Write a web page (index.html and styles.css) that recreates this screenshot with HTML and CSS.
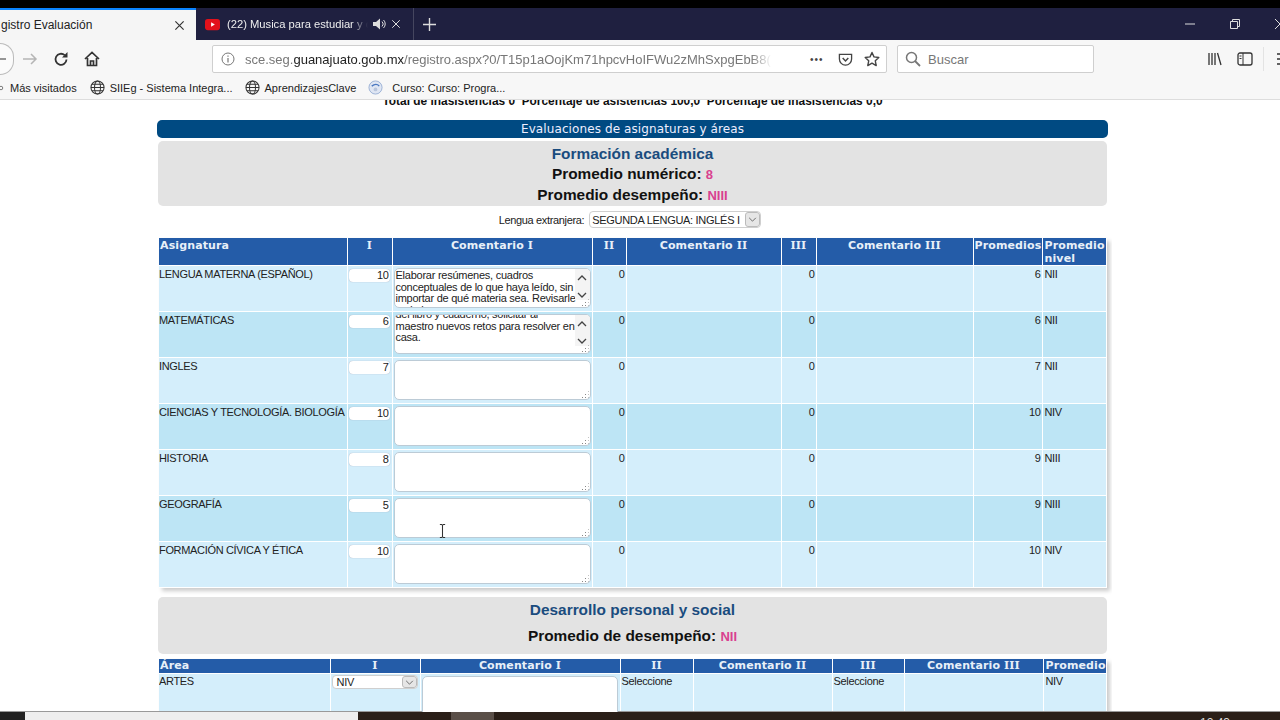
FILE: index.html
```html
<!DOCTYPE html>
<html lang="es">
<head>
<meta charset="utf-8">
<title>Registro Evaluación</title>
<link rel="stylesheet" href="styles.css">
</head>
<body>
<div class="screen">
  <div class="topblack"></div>
  <div class="tabstrip">
    <div class="tab active"><span class="tab-title clip">gistro Evaluación</span>
      <svg class="ic close" viewBox="0 0 12 12"><path d="M1.5 1.5l9 9M10.5 1.5l-9 9" stroke="#333" stroke-width="1.3" fill="none"/></svg></div>
    <div class="tab yt">
      <svg class="ic fav" viewBox="0 0 16 16"><rect x="0" y="2" width="16" height="12" rx="3" fill="#e2111b"/><path d="M6.5 5.5v5l4-2.5z" fill="#fff"/></svg>
      <span class="tab-title2">(22) Musica para estudiar y c</span>
      <svg class="ic speaker" viewBox="0 0 14 14"><path d="M1 5h3l4-3.5v11L4 9H1z" fill="#ddd"/><path d="M10 4.5a3.5 3.5 0 0 1 0 5M11.5 3a5.5 5.5 0 0 1 0 8" stroke="#ddd" fill="none"/></svg>
      <svg class="ic close2" viewBox="0 0 12 12"><path d="M1.5 1.5l9 9M10.5 1.5l-9 9" stroke="#ddd" stroke-width="1.2" fill="none"/></svg>
    </div>
    <svg class="ic plus" viewBox="0 0 14 14"><path d="M7 0v14M0 7h14" stroke="#ddd" stroke-width="1.5" fill="none"/></svg>
    <div class="winbtns">
      <svg class="ic win" viewBox="0 0 10 10"><path d="M0 5h10" stroke="#ddd" fill="none"/></svg>
      <svg class="ic win" viewBox="0 0 10 10"><path d="M.5 2.5h7v7h-7zM2.5 2.5v-2h7v7h-2" stroke="#ddd" fill="none"/></svg>
      <svg class="ic win" viewBox="0 0 10 10"><path d="M0 0l10 10M10 0l-10 10" stroke="#ddd" fill="none"/></svg>
    </div>
  </div>
  <div class="toolbar">
    <div class="backbtn"><svg viewBox="0 0 12 12"><path d="M0 6h12" stroke="#333" stroke-width="2" fill="none"/></svg></div>
    <svg class="ic nav fwd" viewBox="0 0 16 16"><path d="M1 8h13M9 3l5 5-5 5" stroke="#b5b5b5" stroke-width="1.5" fill="none"/></svg>
    <svg class="ic nav" viewBox="0 0 16 16"><path d="M13.5 8.5a5.5 5.5 0 1 1-1.8-4.3" stroke="#333" stroke-width="1.8" fill="none"/><path d="M14.5 1v5.5H9z" fill="#333"/></svg>
    <svg class="ic nav home" viewBox="0 0 16 16"><path d="M1 8l7-6.5L15 8M3.5 7v7.5h9V7M6.5 14.5V10h3v4.5" stroke="#333" stroke-width="1.7" fill="none"/></svg>
    <div class="urlbar">
      <svg class="ic info" viewBox="0 0 14 14"><circle cx="7" cy="7" r="6" stroke="#777" fill="none"/><path d="M7 6v4.5M7 3.5v1.3" stroke="#777" stroke-width="1.2"/></svg>
      <div class="url"><span class="dim">sce.seg.</span>guanajuato.gob.mx<span class="dim">/registro.aspx?0/T15p1aOojKm71hpcvHoIFWu2zMhSxpgEbB8(</span></div>
      <div class="dots">•••</div>
      <svg class="ic pocket" viewBox="0 0 16 16"><path d="M1.5 2.5h13v5a6.5 6.5 0 0 1-13 0z" stroke="#444" stroke-width="1.4" fill="none"/><path d="M5 6.5l3 3 3-3" stroke="#444" stroke-width="1.6" fill="none"/></svg>
      <svg class="ic star" viewBox="0 0 16 16"><path d="M8 1.5l2 4.4 4.8.6-3.5 3.3.9 4.8L8 12.2l-4.2 2.4.9-4.8L1.2 6.5 6 5.9z" stroke="#444" stroke-width="1.4" fill="none" stroke-linejoin="round"/></svg>
    </div>
    <div class="searchbar">
      <svg class="ic glass" viewBox="0 0 16 16"><circle cx="6.5" cy="6.5" r="5" stroke="#777" stroke-width="1.5" fill="none"/><path d="M10 10l5 5" stroke="#777" stroke-width="1.8"/></svg>
      <span class="search-label">Buscar</span>
    </div>
    <svg class="ic lib" viewBox="0 0 16 16"><path d="M2 2v12M5 2v12M8 2v12M10.5 2l3.5 12" stroke="#333" stroke-width="1.3" fill="none"/></svg>
    <svg class="ic side" viewBox="0 0 16 16"><rect x="1" y="2" width="14" height="12" rx="2" stroke="#333" stroke-width="1.3" fill="none"/><path d="M6 2v12M2.5 5h2M2.5 7.5h2" stroke="#333" fill="none"/></svg>
    <div class="sep"></div>
    <svg class="ic menu" viewBox="0 0 8 16"><path d="M0 3h8M0 8h8M0 13h8" stroke="#333" stroke-width="1.5"/></svg>
  </div>
  <div class="bookmarks">
    <svg class="ic gear" viewBox="0 0 10 12"><circle cx="2" cy="6" r="3.5" stroke="#555" stroke-width="1.5" fill="none"/></svg>
    <span class="bm first">Más visitados</span>
    <svg class="ic globe" viewBox="0 0 16 16"><g stroke="#333" fill="none" stroke-width="1.1"><circle cx="8" cy="8" r="7"/><ellipse cx="8" cy="8" rx="3.2" ry="7"/><path d="M1 8h14M2 4.5h12M2 11.5h12"/></g></svg>
    <span class="bm sii">SIIEg - Sistema Integra...</span>
    <svg class="ic globe" viewBox="0 0 16 16"><g stroke="#333" fill="none" stroke-width="1.1"><circle cx="8" cy="8" r="7"/><ellipse cx="8" cy="8" rx="3.2" ry="7"/><path d="M1 8h14M2 4.5h12M2 11.5h12"/></g></svg>
    <span class="bm apr">AprendizajesClave</span>
    <svg class="ic globe cur" viewBox="0 0 16 16"><circle cx="8" cy="8" r="7" fill="#dfe6f3" stroke="#9ab0d4"/><path d="M4 6.5c3-2.5 6-2.5 8 0" stroke="#4a78c0" stroke-width="1.5" fill="none"/><circle cx="8" cy="10" r="2" fill="#b9c6dd"/></svg>
    <span class="bm">Curso: Curso: Progra...</span>
  </div>
  <main class="page">
    <p class="totals">Total de inasistencias 0 &nbsp;Porcentaje de asistencias 100,0 &nbsp;Porcentaje de inasistencias 0,0</p>
    <div class="section-bar">Evaluaciones de asignaturas y áreas</div>
    <section class="summary s1">
      <h2>Formación académica</h2>
      <p>Promedio numérico: <b>8</b></p>
      <p>Promedio desempeño: <b>NIII</b></p>
    </section>
    <div class="lang">
      <span>Lengua extranjera:</span>
      <div class="select lang-select"><span>SEGUNDA LENGUA: INGLÉS I</span><i class="arrow"><svg viewBox="0 0 10 6"><path d="M1 1l4 4 4-4" stroke="#555" fill="none"/></svg></i></div>
    </div>
    <div class="table-shadow">
    <table class="grades">
      <colgroup><col class="c1"><col class="c2"><col class="c3"><col class="c4"><col class="c5"><col class="c6"><col class="c7"><col class="c8"><col class="c9"></colgroup>
      <thead><tr><th class="left">Asignatura</th><th><s>I</s></th><th>Comentario <s>I</s></th><th><s>II</s></th><th>Comentario <s>II</s></th><th><s>III</s></th><th>Comentario <s>III</s></th><th>Promedios</th><th class="left">Promedio nivel</th></tr></thead>
      <tbody>
        <tr><td>LENGUA MATERNA (ESPAÑOL)</td><td><div class="num">10</div></td>
          <td class="tc"><div class="ta scroll"><div class="ta-text">Elaborar resúmenes, cuadros<br>conceptuales de lo que haya leído, sin<br>importar de qué materia sea. Revisarle<br>cada luego</div><div class="sb"><svg viewBox="0 0 10 6"><path d="M1 5l4-4 4 4" stroke="#444" stroke-width="1.3" fill="none"/></svg><svg viewBox="0 0 10 6"><path d="M1 1l4 4 4-4" stroke="#444" stroke-width="1.3" fill="none"/></svg></div><div class="grip"></div></div></td>
          <td class="r">0</td><td></td><td class="r">0</td><td></td><td class="r">6</td><td>NII</td></tr>
        <tr><td>MATEMÁTICAS</td><td><div class="num">6</div></td>
          <td class="tc"><div class="ta scroll"><div class="ta-text up">del libro y cuaderno, solicitar al<br>maestro nuevos retos para resolver en<br>casa.</div><div class="sb"><svg viewBox="0 0 10 6"><path d="M1 5l4-4 4 4" stroke="#444" stroke-width="1.3" fill="none"/></svg><svg viewBox="0 0 10 6"><path d="M1 1l4 4 4-4" stroke="#444" stroke-width="1.3" fill="none"/></svg></div><div class="grip"></div></div></td>
          <td class="r">0</td><td></td><td class="r">0</td><td></td><td class="r">6</td><td>NII</td></tr>
        <tr><td>INGLES</td><td><div class="num">7</div></td><td class="tc"><div class="ta"><div class="grip"></div></div></td><td class="r">0</td><td></td><td class="r">0</td><td></td><td class="r">7</td><td>NII</td></tr>
        <tr><td>CIENCIAS Y TECNOLOGÍA. BIOLOGÍA</td><td><div class="num">10</div></td><td class="tc"><div class="ta"><div class="grip"></div></div></td><td class="r">0</td><td></td><td class="r">0</td><td></td><td class="r">10</td><td>NIV</td></tr>
        <tr><td>HISTORIA</td><td><div class="num">8</div></td><td class="tc"><div class="ta"><div class="grip"></div></div></td><td class="r">0</td><td></td><td class="r">0</td><td></td><td class="r">9</td><td>NIII</td></tr>
        <tr><td>GEOGRAFÍA</td><td><div class="num">5</div></td><td class="tc"><div class="ta"><div class="grip"></div><svg class="ibeam" viewBox="0 0 8 16"><path d="M1 .5h2l1 1 1-1h2M4 1.5v13M1 15.5h2l1-1 1 1h2" stroke="#333" stroke-width="1.2" fill="none"/></svg></div></td><td class="r">0</td><td></td><td class="r">0</td><td></td><td class="r">9</td><td>NIII</td></tr>
        <tr><td>FORMACIÓN CÍVICA Y ÉTICA</td><td><div class="num">10</div></td><td class="tc"><div class="ta"><div class="grip"></div></div></td><td class="r">0</td><td></td><td class="r">0</td><td></td><td class="r">10</td><td>NIV</td></tr>
      </tbody>
    </table>
    </div>
    <section class="summary s2">
      <h2>Desarrollo personal y social</h2>
      <p>Promedio de desempeño: <b>NII</b></p>
    </section>
    <div class="table-shadow second">
    <table class="grades areas">
      <colgroup><col class="a1"><col class="a2"><col class="a3"><col class="a4"><col class="a5"><col class="a6"><col class="a7"><col class="a8"></colgroup>
      <thead><tr><th class="left">Área</th><th><s>I</s></th><th>Comentario <s>I</s></th><th><s>II</s></th><th>Comentario <s>II</s></th><th><s>III</s></th><th>Comentario <s>III</s></th><th class="left">Promedio</th></tr></thead>
      <tbody>
        <tr><td>ARTES</td><td class="tc"><div class="select niv"><span>NIV</span><i class="arrow"><svg viewBox="0 0 10 6"><path d="M1 1l4 4 4-4" stroke="#555" fill="none"/></svg></i></div></td><td class="tc"><div class="ta tall"></div></td><td>Seleccione</td><td></td><td>Seleccione</td><td></td><td>NIV</td></tr>
      </tbody>
    </table>
    </div>
  </main>
  <footer class="taskbar">
    <div class="tb-black"></div><div class="tb-light"></div><div class="tb-dark"></div><div class="tb-active"></div><div class="tb-rest"><span>12:43</span></div>
  </footer>
</div>
</body>
</html>
```
FILE: styles.css
```css
* { box-sizing: border-box; }
html, body { margin: 0; padding: 0; }
body { font-family: "Liberation Sans", Arial, sans-serif; background: #fff; }
.screen { width: 1280px; height: 720px; overflow: hidden; display: flex; flex-direction: column; }
.ic { display: block; flex: none; }
.topblack { height: 8px; background: #000; flex: none; }
.tabstrip { height: 32px; background: #1f2040; display: flex; align-items: stretch; flex: none; color: #eee; font-size: 12px; }
.tab { display: flex; align-items: center; }
.tab.active { width: 196px; background: #f5f5f5; border-top: 2px solid #0a84ff; color: #222; justify-content: space-between; padding-right: 11px; }
.tab-title.clip { margin-left: 1px; }
.close { width: 11px; height: 11px; }
.tab.yt { width: 218px; padding-left: 9px; border-right: 1px solid #45465f; position: relative; font-size: 11.2px; }
.fav { width: 15px; height: 15px; }
.tab-title2 { margin-left: 7px; width: 141px; white-space: nowrap; overflow: hidden; flex: none; -webkit-mask-image: linear-gradient(90deg, #000 88%, transparent); mask-image: linear-gradient(90deg, #000 88%, transparent); }
.speaker { width: 14px; height: 14px; position: absolute; right: 27px; }
.close2 { width: 10px; height: 10px; position: absolute; right: 12px; }
.plus { width: 13px; height: 13px; align-self: center; margin-left: 9px; }
.winbtns { margin-left: auto; display: flex; gap: 35px; align-items: center; width: 105px; }
.win { width: 10px; height: 10px; }
.winbtns .win:first-child { margin-left: 10px; }
.toolbar { height: 36px; padding-top: 2px; background: #f7f7f7; display: flex; align-items: center; flex: none; }
.backbtn { width: 14px; height: 32px; background: #fbfbfb; border: 1px solid #bbb; border-left: 0; border-radius: 0 16px 16px 0; display: flex; align-items: center; flex: none; }
.backbtn svg { width: 6px; height: 6px; }
.nav { width: 16px; height: 16px; margin-left: 15px; }
.nav.fwd { margin-left: 8px; }
.home { margin-left: 15px; }
.toolbar .urlbar { margin-left: 112px; }
.urlbar { width: 675px; height: 28px; background: #fff; border: 1px solid #cfcfcf; border-radius: 2px; display: flex; align-items: center; font-size: 13px; color: #222; flex: none; }
.info { width: 14px; height: 14px; margin-left: 8px; }
.url { margin-left: 10px; padding-top: 1px; width: 527px; white-space: nowrap; overflow: hidden; flex: none; -webkit-mask-image: linear-gradient(90deg, #000 96%, transparent); mask-image: linear-gradient(90deg, #000 96%, transparent); }
.dim { color: #777; }
.dots { margin-left: 38px; font-size: 10px; color: #444; letter-spacing: 1px; width: 23px; white-space: nowrap; flex: none; }
.pocket { width: 15px; height: 15px; margin-left: 5px; }
.star { width: 16px; height: 16px; margin-left: 11px; }
.searchbar { margin-left: 10px; width: 197px; height: 28px; background: #fff; border: 1px solid #cfcfcf; border-radius: 2px; display: flex; align-items: center; font-size: 13px; color: #777; flex: none; }
.search-label { padding-top: 1px; }
.glass { width: 16px; height: 16px; margin: 0 7px; }
.lib { width: 16px; height: 16px; margin-left: 113px; }
.side { width: 16px; height: 16px; margin-left: 14px; }
.sep { width: 1px; height: 24px; background: #e3e3e3; margin-left: 10px; flex: none; }
.menu { width: 8px; height: 16px; margin-left: 13px; }
.bookmarks { height: 24px; background: #f7f7f7; border-bottom: 1px solid #ddd; display: flex; align-items: center; font-size: 11px; color: #222; flex: none; }
.gear { width: 5px; height: 12px; }
.bm { white-space: nowrap; }
.bm.first { margin-left: 5px; margin-right: 13px; }
.bm.sii { margin-right: 12px; }
.bm.apr { margin-right: 12px; }
.globe { width: 15px; height: 15px; margin-right: 5px; }
.globe.cur { margin-right: 9px; }
.page { flex: 1; min-height: 0; overflow: hidden; padding-left: 157px; width: 1112px; }
.totals { margin: -3px 0 0; height: 22px; text-align: center; font-size: 11.9px; font-weight: bold; color: #111; line-height: 9px; padding-right: 4px; }
.section-bar { margin-top: 1px; height: 18px; width: 951px; background: #004a82; border-radius: 5px; color: #eef; font-family: "DejaVu Sans", sans-serif; font-size: 12px; letter-spacing: .1px; text-align: center; line-height: 18px; }
.summary { margin: 3px 0 0 1px; width: 949px; background: #e3e3e3; border-radius: 5px; text-align: center; color: #111; }
.summary h2 { margin: 0; font-size: 15.4px; font-weight: bold; color: #1a4c7e; }
.summary p { margin: 0; font-size: 15.4px; font-weight: bold; }
.summary b { color: #d9418f; font-size: 13px; }
.s1 { height: 65px; padding-top: 3px; }
.s1 h2 { line-height: 20px; }
.s1 p { line-height: 20px; }
.lang { height: 32px; display: flex; justify-content: center; align-items: flex-start; font-size: 11px; letter-spacing: -.35px; padding-top: 5px; gap: 5px; color: #222; padding-right: 9px; }
.lang > span { line-height: 18px; }
.select { display: flex; align-items: center; justify-content: space-between; background: #fff; border: 1px solid #cfcfcf; border-radius: 4px; font-size: 11px; letter-spacing: -.3px; color: #222; overflow: hidden; white-space: nowrap; }
.lang-select { width: 172px; height: 17px; padding-left: 2px; }
.arrow { display: flex; align-items: center; justify-content: center; width: 15px; height: 100%; background: #e6e6e6; border: 1px solid #bbb; border-radius: 3px; }
.arrow svg { width: 9px; height: 5px; }
.table-shadow { margin-left: 2px; width: 948px; box-shadow: 3px 3px 4px #ccc; }
.table-shadow.second { margin-top: 5px; }
.grades { border-collapse: collapse; table-layout: fixed; width: 947px; font-size: 11px; letter-spacing: -.33px; color: #222; }
.c1 { width: 188px; } .c2 { width: 45px; } .c3 { width: 200px; } .c4 { width: 34px; } .c5 { width: 155px; } .c6 { width: 35px; } .c7 { width: 157px; } .c8 { width: 69px; } .c9 { width: 64px; }
.a1 { width: 171px; } .a2 { width: 90px; } .a3 { width: 200px; } .a4 { width: 73px; } .a5 { width: 139px; } .a6 { width: 72px; } .a7 { width: 139px; } .a8 { width: 63px; }
.grades th { background: #245ca8; color: #e8f0f8; font-family: "DejaVu Sans", sans-serif; font-size: 11px; letter-spacing: .12px; font-weight: bold; padding: 1px 1px 0; border: 1px solid #fff; border-top: 0; text-align: center; vertical-align: top; line-height: 13px; height: 26px; }
.grades th:first-child, .grades td:first-child { border-left: 0; padding-left: 0; }
.grades th:last-child, .grades td:last-child { border-right: 0; padding-left: 2px; }
.grades th:first-child { padding-left: 1px; }
.grades th s { text-decoration: none; font-family: "DejaVu Serif", serif; }
.grades th.left { text-align: left; }
.grades td { height: 46px; padding: 1px 1px 0; vertical-align: top; border: 1px solid #fff; border-top: 0; line-height: 14px; overflow: hidden; white-space: nowrap; }
.grades tbody tr:nth-child(odd) td { background: #d4eefb; }
.grades tbody tr:nth-child(even) td { background: #bde5f5; }
.grades td.r { text-align: right; }
.grades td.tc { padding: 2px 1px 0; }
.num { width: 41px; height: 13px; margin-top: 2px; background: #fff; border-radius: 4px; text-align: right; line-height: 13px; box-shadow: 0 0 1px #99a; padding-right: 1px; }
.ta { position: relative; height: 40px; background: #fff; border: 1px solid #bccbd6; border-radius: 5px; }
.ta.scroll { overflow: hidden; }
.ta-text { font-size: 11px; letter-spacing: -.25px; line-height: 11.5px; white-space: nowrap; padding: 1px 0 0 1px; }
.ta-text.up { margin-top: -7px; }
.sb { position: absolute; right: 0; top: 0; bottom: 7px; width: 15px; background: #f4f4f4; display: flex; flex-direction: column; align-items: center; padding-top: 6px; gap: 11px; }
.sb svg { width: 10px; height: 6px; flex: none; }
.grip { position: absolute; right: 1px; bottom: 1px; width: 8px; height: 8px; background: radial-gradient(circle, #888 0 .7px, transparent 1px) 0 0 / 3px 3px; clip-path: polygon(100% 0, 100% 100%, 0 100%); }
.ibeam { position: absolute; left: 44px; top: 24px; width: 7px; height: 16px; }
.summary.s2 { margin-top: 9px; height: 57px; }
.s2 h2 { line-height: 20px; padding-top: 3px; height: 26px; }
.s2 p { line-height: 26px; }
.areas th { height: 14px; line-height: 14px; padding-top: 0; }
.areas td { height: 60px; padding-top: 0; }
.niv { width: 86px; height: 14px; margin-top: 1px; padding-left: 4px; }
.ta.tall { height: 60px; width: 196px; margin-top: 2px; }
.areas td.tc { padding-top: 0; }
.taskbar { height: 8px; display: flex; flex: none; background: #2a1f18; box-shadow: 0 -1px 0 #999; }
.tb-black { width: 25px; background: #222; }
.tb-light { width: 333px; background: #eee; }
.tb-dark { width: 93px; }
.tb-active { width: 43px; background: #5a4f48; }
.tb-rest { flex: 1; color: #ddd; font-size: 12px; overflow: hidden; text-align: right; padding: 5px 50px 0 0; line-height: 13px; }
.tb-rest span { display: block; }
```
